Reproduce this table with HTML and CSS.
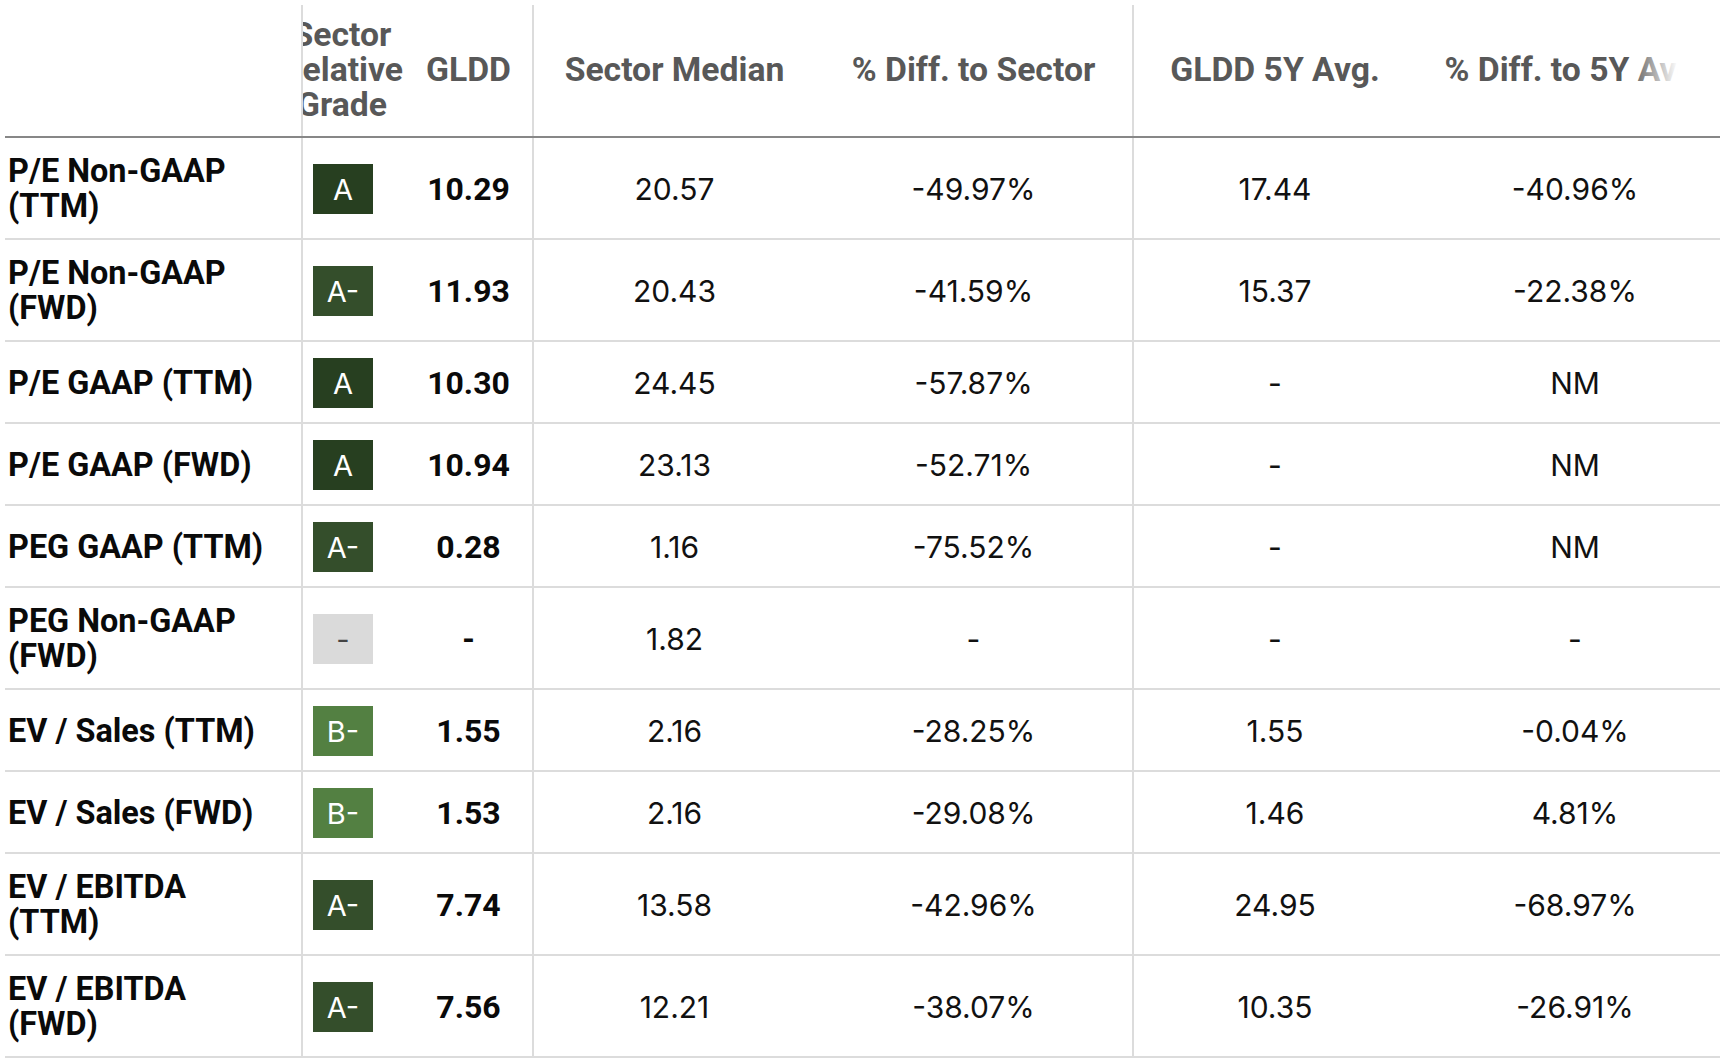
FILE: index.html
```html
<!DOCTYPE html>
<html lang="en">
<head>
<meta charset="utf-8">
<title>GLDD Valuation</title>
<link rel="stylesheet" href="styles.css">
</head>
<body>
<div class="wrap">
  <div class="table">
    <div class="row head">
      <div class="cell label"></div>
      <div class="cell grade sep"><div class="grade-title">Sector Relative Grade</div></div>
      <div class="cell">GLDD</div>
      <div class="cell sep">Sector Median</div>
      <div class="cell">% Diff. to Sector</div>
      <div class="cell sep">GLDD 5Y Avg.</div>
      <div class="cell">% Diff. to 5Y Avg.</div>
    </div>

    <div class="row">
      <div class="cell label">P/E Non-GAAP (TTM)</div>
      <div class="cell grade sep"><span class="badge g-a">A</span></div>
      <div class="cell main">10.29</div>
      <div class="cell sep">20.57</div>
      <div class="cell">-49.97%</div>
      <div class="cell sep">17.44</div>
      <div class="cell">-40.96%</div>
    </div>
    <div class="row">
      <div class="cell label">P/E Non-GAAP (FWD)</div>
      <div class="cell grade sep"><span class="badge g-am">A-</span></div>
      <div class="cell main">11.93</div>
      <div class="cell sep">20.43</div>
      <div class="cell">-41.59%</div>
      <div class="cell sep">15.37</div>
      <div class="cell">-22.38%</div>
    </div>
    <div class="row">
      <div class="cell label">P/E GAAP (TTM)</div>
      <div class="cell grade sep"><span class="badge g-a">A</span></div>
      <div class="cell main">10.30</div>
      <div class="cell sep">24.45</div>
      <div class="cell">-57.87%</div>
      <div class="cell sep">-</div>
      <div class="cell">NM</div>
    </div>
    <div class="row">
      <div class="cell label">P/E GAAP (FWD)</div>
      <div class="cell grade sep"><span class="badge g-a">A</span></div>
      <div class="cell main">10.94</div>
      <div class="cell sep">23.13</div>
      <div class="cell">-52.71%</div>
      <div class="cell sep">-</div>
      <div class="cell">NM</div>
    </div>
    <div class="row">
      <div class="cell label">PEG GAAP (TTM)</div>
      <div class="cell grade sep"><span class="badge g-am">A-</span></div>
      <div class="cell main">0.28</div>
      <div class="cell sep">1.16</div>
      <div class="cell">-75.52%</div>
      <div class="cell sep">-</div>
      <div class="cell">NM</div>
    </div>
    <div class="row">
      <div class="cell label">PEG Non-GAAP (FWD)</div>
      <div class="cell grade sep"><span class="badge g-none">-</span></div>
      <div class="cell main">-</div>
      <div class="cell sep">1.82</div>
      <div class="cell">-</div>
      <div class="cell sep">-</div>
      <div class="cell">-</div>
    </div>
    <div class="row">
      <div class="cell label">EV / Sales (TTM)</div>
      <div class="cell grade sep"><span class="badge g-bm">B-</span></div>
      <div class="cell main">1.55</div>
      <div class="cell sep">2.16</div>
      <div class="cell">-28.25%</div>
      <div class="cell sep">1.55</div>
      <div class="cell">-0.04%</div>
    </div>
    <div class="row">
      <div class="cell label">EV / Sales (FWD)</div>
      <div class="cell grade sep"><span class="badge g-bm">B-</span></div>
      <div class="cell main">1.53</div>
      <div class="cell sep">2.16</div>
      <div class="cell">-29.08%</div>
      <div class="cell sep">1.46</div>
      <div class="cell">4.81%</div>
    </div>
    <div class="row">
      <div class="cell label">EV / EBITDA (TTM)</div>
      <div class="cell grade sep"><span class="badge g-am">A-</span></div>
      <div class="cell main">7.74</div>
      <div class="cell sep">13.58</div>
      <div class="cell">-42.96%</div>
      <div class="cell sep">24.95</div>
      <div class="cell">-68.97%</div>
    </div>
    <div class="row">
      <div class="cell label">EV / EBITDA (FWD)</div>
      <div class="cell grade sep"><span class="badge g-am">A-</span></div>
      <div class="cell main">7.56</div>
      <div class="cell sep">12.21</div>
      <div class="cell">-38.07%</div>
      <div class="cell sep">10.35</div>
      <div class="cell">-26.91%</div>
    </div>
  </div>
  <div class="fade"></div>
</div>
</body>
</html>
```

FILE: styles.css
```css
* { box-sizing: border-box; }

html, body {
  margin: 0;
  padding: 0;
  background: #fff;
  overflow: hidden;
}

body {
  font-family: Inter, Roboto, "Liberation Sans", Arial, sans-serif;
  font-size: 30px;
  line-height: 35px;
  color: #111;
}

.wrap {
  position: relative;
  width: 1720px;
  height: 1058px;
  overflow: hidden;
  padding: 5px 0 0 5px;
}

.table {
  width: 1729px;
}

.row {
  display: grid;
  grid-template-columns: 296px 104px 127px 283px 317px 284px 318px;
  border-bottom: 2px solid #dcdcdc;
}

.row.head {
  border-bottom: 2px solid #878787;
  font-family: Roboto, "Liberation Sans", Arial, sans-serif;
  font-size: 33.7px;
  font-weight: 700;
  color: #585858;
}

.cell {
  display: flex;
  align-items: center;
  justify-content: center;
  padding: 16px 0 14px;
  white-space: nowrap;
  min-height: 80px;
}

.head .cell {
  padding: 12px 0 14px;
  min-height: 131px;
}

.sep {
  border-left: 2px solid #dcdcdc;
}

.cell.label {
  justify-content: flex-start;
  white-space: normal;
  font-family: Roboto, "Liberation Sans", Arial, sans-serif;
  font-size: 32.4px;
  font-weight: 700;
  color: #0a0a0a;
  padding-left: 3px;
  padding-right: 26px;
}

.cell.grade {
  justify-content: flex-start;
  padding-left: 10px;
}

.head .cell.grade {
  justify-content: center;
  padding-left: 0;
  padding-right: 24px;
  overflow: hidden;
}

.grade-title {
  width: min-content;
  flex-shrink: 0;
  white-space: normal;
  text-align: center;
}

.cell.main {
  font-family: Roboto, "Liberation Sans", Arial, sans-serif;
  font-size: 32px;
  font-weight: 700;
  color: #0a0a0a;
}

.badge {
  display: flex;
  align-items: center;
  justify-content: center;
  width: 60px;
  height: 50px;
  color: #fff;
  font-size: 29px;
  font-weight: 400;
}

.g-a { background: #273f20; }
.g-am { background: #344e2b; }
.g-bm { background: #538042; }
.g-none { background: #dadada; color: #444; }

.fade {
  position: absolute;
  top: 0;
  left: 1630px;
  width: 90px;
  height: 133px;
  background: linear-gradient(to right, rgba(255,255,255,0) 0, #fff 48px);
  pointer-events: none;
}
```
